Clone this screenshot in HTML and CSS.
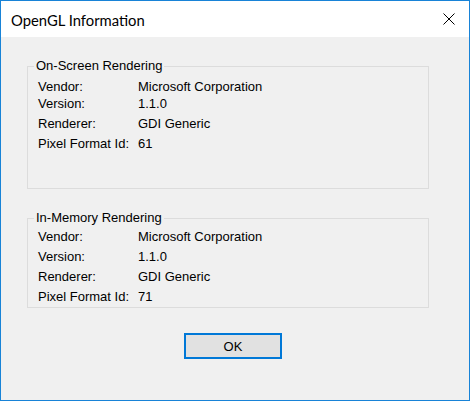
FILE: index.html
```html
<!DOCTYPE html>
<html>
<head>
<meta charset="utf-8">
<link rel="stylesheet" href="styles.css">
</head>
<body>
<div class="window">
  <div class="titlebar">
    <span class="title">OpenGL Information</span>
    <svg class="close" width="12" height="12" viewBox="0 0 12 12">
      <path d="M0.5 0.5 L11.5 11.5 M11.5 0.5 L0.5 11.5" stroke="#000" stroke-width="1" fill="none"/>
    </svg>
  </div>
  <div class="content">
    <div class="group group-screen">
      <div class="legend">On-Screen Rendering</div>
      <div class="rows">
        <div class="row"><span>Vendor:</span><span>Microsoft Corporation</span></div>
        <div class="row"><span>Version:</span><span>1.1.0</span></div>
        <div class="row"><span>Renderer:</span><span>GDI Generic</span></div>
        <div class="row"><span>Pixel Format Id:</span><span>61</span></div>
      </div>
    </div>
    <div class="group group-memory">
      <div class="legend">In-Memory Rendering</div>
      <div class="rows">
        <div class="row"><span>Vendor:</span><span>Microsoft Corporation</span></div>
        <div class="row"><span>Version:</span><span>1.1.0</span></div>
        <div class="row"><span>Renderer:</span><span>GDI Generic</span></div>
        <div class="row"><span>Pixel Format Id:</span><span>71</span></div>
      </div>
    </div>
    <button class="ok">OK</button>
  </div>
</div>
</body>
</html>
```

FILE: styles.css
```css
html, body {
  margin: 0;
  padding: 0;
}
body {
  width: 470px;
  height: 401px;
  overflow: hidden;
}
.window {
  box-sizing: border-box;
  width: 470px;
  height: 401px;
  border: 1px solid #1883d7;
  display: flex;
  flex-direction: column;
  background: #f0f0f0;
}
.titlebar {
  height: 36px;
  background: #ffffff;
  display: flex;
  align-items: center;
  flex: none;
}
.title {
  font-family: "Segoe UI", "Lato", "Noto Sans", sans-serif;
  font-size: 14.8px;
  color: #000;
  margin-left: 10px;
  padding-top: 2px;
}
.close {
  margin-left: auto;
  margin-right: 14px;
  display: block;
}
.content {
  flex: 1;
  padding: 29px 0 0 26px;
  font-family: "Liberation Sans", Arial, sans-serif;
  font-size: 13px;
  color: #000;
}
.group {
  box-sizing: border-box;
  width: 402px;
  border: 1px solid #dcdcdc;
}
.group-screen {
  height: 123px;
}
.group-memory {
  height: 90px;
  margin-top: 29px;
}
.legend {
  width: fit-content;
  margin: -9px 0 0 6px;
  padding: 0 2px;
  line-height: 15px;
  background: #f0f0f0;
}
.rows {
  display: flex;
  flex-direction: column;
  gap: 5px;
  padding-left: 10px;
}
.group-screen .rows {
  margin-top: 6px;
}
.group-screen .row:first-child {
  margin-bottom: -3px;
}
.group-memory .rows {
  margin-top: 4px;
}
.row {
  display: grid;
  grid-template-columns: 100px 1fr;
  line-height: 15px;
  white-space: nowrap;
}
.ok {
  display: block;
  box-sizing: border-box;
  width: 98px;
  height: 26px;
  margin: 25px 0 0 157px;
  border: 2px solid #0078d7;
  background: #e1e1e1;
  font-family: "Liberation Sans", Arial, sans-serif;
  font-size: 13px;
  color: #000;
  padding: 0;
  border-radius: 0;
}
```
